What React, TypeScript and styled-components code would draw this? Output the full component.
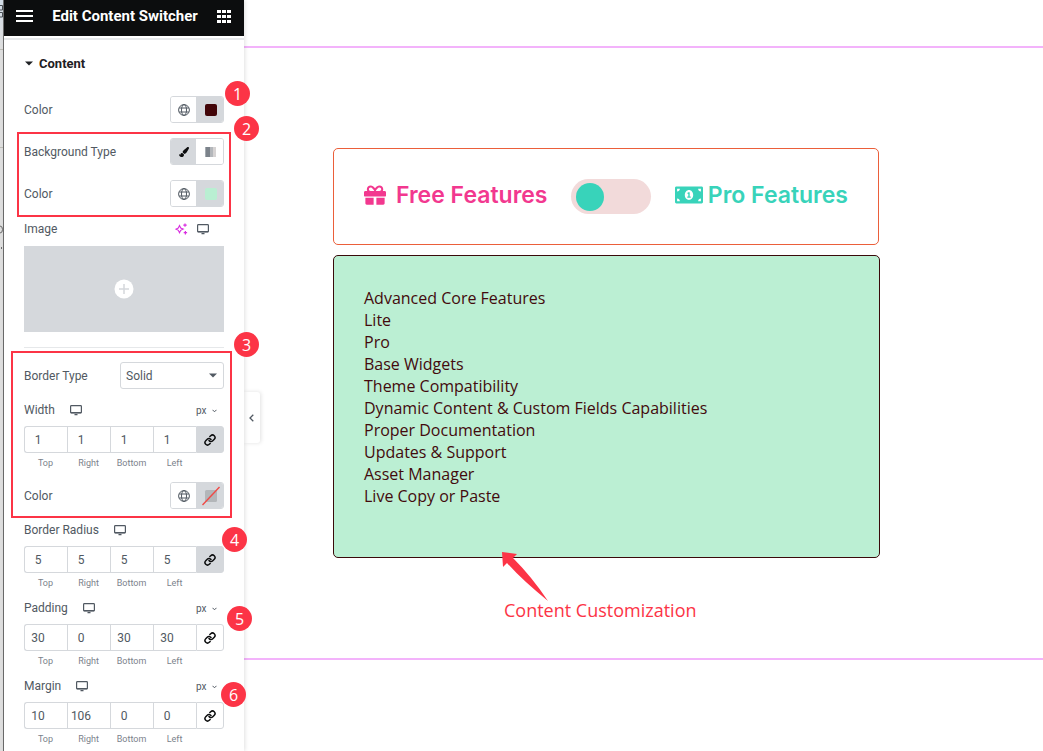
import React, { useState } from "react";
import styled, { createGlobalStyle } from "styled-components";
import { FaGift, FaMoneyBillAlt, FaPaintBrush } from "react-icons/fa";
import { Link } from "lucide-react";

const GlobalStyle = createGlobalStyle`
  *, *::before, *::after { box-sizing: border-box; }
  body { margin: 0; background: #fff; font-family: Roboto, "Liberation Sans", sans-serif; }
  button, input, select { font: inherit; color: inherit; margin: 0; }
`;

const accent = "#fc3446";
const line = "#d5d8dc";
const ink = "#515962";

const Page = styled.div`
  display: grid;
  grid-template-columns: 4px 240px minmax(0, 1fr);
  min-height: 100vh;
`;

/* Edge of the window behind the editor */
const Backdrop = styled.div`
  overflow: hidden;
  background: #dedede;
  border-right: 1px solid #6c6c6c;
`;
const BackdropBar = styled.div<{ $height: number; $tint?: boolean }>`
  height: ${(p) => p.$height}px;
  border-bottom: 1px solid #bdbdb6;
  background: ${(p) => (p.$tint ? "linear-gradient(#d3dde8, #dedede)" : "transparent")};
  svg { display: block; }
`;

const Panel = styled.aside`
  position: relative;
  z-index: 2;
  background: #fff;
  color: ${ink};
  font-size: 12px;
  box-shadow: 1px 0 4px rgba(0, 0, 0, 0.12);
`;
const PanelHeader = styled.header`
  display: flex;
  align-items: center;
  justify-content: space-between;
  height: 36px;
  padding: 0 13px 4px 12px;
  background: #0c0d0e;
  color: #fff;
`;
const PanelTitle = styled.h1`
  margin: 0;
  font-size: 15px;
  line-height: 20px;
  font-weight: 700;
`;
const HeaderButton = styled.button`
  display: flex;
  padding: 0;
  border: 0;
  background: none;
`;
const PanelBody = styled.div`
  margin-top: 2px;
  padding: 0 20px 6px;
  border-top: 2px solid #e6e8ea;
`;
const SectionToggle = styled.button`
  display: flex;
  align-items: center;
  gap: 6px;
  width: 100%;
  height: 47px;
  margin-bottom: 9px;
  padding: 0;
  border: 0;
  background: none;
  color: #1f2124;
  font-size: 13px;
  font-weight: 700;
`;
const Group = styled.section<{ $gap: number; $top?: number }>`
  position: relative;
  display: flex;
  flex-direction: column;
  gap: ${(p) => p.$gap}px;
  margin-top: ${(p) => p.$top ?? 0}px;
`;
const Row = styled.div`
  display: flex;
  align-items: center;
  justify-content: space-between;
  height: 27px;
`;
const LabelRow = styled.div`
  display: flex;
  align-items: center;
  height: 16px;
`;
const LabelText = styled.span`
  line-height: 16px;
  margin-right: 15px;
`;
const Spacer = styled.span`
  flex: 1;
`;
const Outline = styled.div<{ $left: number; $right: number; $top: number; $bottom: number }>`
  position: absolute;
  left: ${(p) => -p.$left}px;
  right: ${(p) => -p.$right}px;
  top: ${(p) => -p.$top}px;
  bottom: ${(p) => -p.$bottom}px;
  border: 2px solid ${accent};
  pointer-events: none;
`;
const Badge = styled.span<{ $x: number; $y: number }>`
  position: absolute;
  left: ${(p) => p.$x}px;
  top: ${(p) => p.$y}px;
  z-index: 3;
  width: 25px;
  height: 25px;
  border-radius: 50%;
  background: ${accent};
  color: #fff;
  font: 16px/26px "Open Sans", "Noto Sans", sans-serif;
  text-align: center;
`;

const Segments = styled.div`
  display: flex;
  width: 54px;
  height: 27px;
  border: 1px solid ${line};
  border-radius: 3px;
  overflow: hidden;
`;
const Segment = styled.button<{ $on?: boolean }>`
  display: flex;
  flex: 1;
  align-items: center;
  justify-content: center;
  padding: 0;
  border: 0;
  background: ${(p) => (p.$on ? line : "#fff")};
  color: ${(p) => (p.$on ? "#0c0d0e" : ink)};
  & + & { padding-left: 2px; }
`;
const Swatch = styled.span<{ $color: string }>`
  width: 12px;
  height: 12px;
  border-radius: 2px;
  background: ${(p) => p.$color};
`;

const MediaButton = styled.button`
  display: flex;
  align-items: center;
  justify-content: center;
  width: 100%;
  height: 86px;
  margin-top: 9px;
  padding: 0;
  border: 0;
  background: ${line};
`;
const ImageTools = styled.div`
  display: flex;
  align-items: center;
  gap: 9px;
  margin: 0 15px 0 auto;
`;
const Divider = styled.hr`
  height: 1px;
  margin: 15px 0 14px;
  border: 0;
  background: #e6e8ea;
`;
const SelectWrap = styled.div`
  position: relative;
  width: 104px;
  svg { position: absolute; right: 7px; top: 11px; pointer-events: none; }
`;
const Select = styled.select`
  appearance: none;
  display: block;
  width: 100%;
  height: 27px;
  padding: 0 5px;
  border: 1px solid ${line};
  border-radius: 3px;
  background: #fff;
`;
const UnitWrap = styled.div`
  position: relative;
  width: 28px;
  svg { position: absolute; right: 7px; top: 7px; pointer-events: none; }
`;
const UnitSelect = styled.select`
  appearance: none;
  display: block;
  width: 100%;
  height: 16px;
  padding: 0;
  border: 0;
  background: none;
  font-size: 10px;
`;

const Sides = styled.div`
  display: grid;
  grid-template-columns: repeat(4, 1fr) 28px;
  margin-top: 8px;
`;
const Side = styled.label`
  display: flex;
  flex-direction: column;
  gap: 4px;
  font-size: 9px;
  line-height: 12px;
  text-align: center;
  color: #7b828c;
  &:first-child input { border-radius: 3px 0 0 3px; }
`;
const SideInput = styled.input`
  width: 100%;
  height: 27px;
  padding: 0 16px 0 0;
  border: 1px solid ${line};
  border-right: 0;
  border-radius: 0;
  background: #fff;
  color: ${ink};
  font-size: 12px;
  text-align: center;
`;
const LinkButton = styled.button<{ $on: boolean }>`
  display: flex;
  align-items: center;
  justify-content: center;
  height: 27px;
  padding: 0;
  border: 1px solid ${line};
  border-radius: 0 3px 3px 0;
  background: ${(p) => (p.$on ? line : "#fff")};
  color: #0c0d0e;
`;

const Canvas = styled.main`
  position: relative;
  padding-top: 46px;
`;
const CollapseButton = styled.button`
  position: absolute;
  left: 0;
  top: 392px;
  display: flex;
  align-items: center;
  justify-content: center;
  width: 16px;
  height: 51px;
  padding: 0 2px 0 0;
  border: 0;
  border-radius: 0 3px 3px 0;
  background: #fff;
  box-shadow: 1px 0 4px rgba(0, 0, 0, 0.12);
`;
const PreviewSection = styled.section`
  padding: 100px 163px 36px 89px;
  border: solid #f3b3fb;
  border-width: 2px 0;
`;
const Switcher = styled.div`
  display: flex;
  align-items: center;
  justify-content: space-between;
  height: 97px;
  margin-right: 1px;
  padding: 0 30px;
  border: 1px solid #eb5f3a;
  border-radius: 5px;
`;
const Option = styled.span<{ $color: string; $gap: number }>`
  display: flex;
  align-items: center;
  gap: ${(p) => p.$gap}px;
  margin-bottom: 4px;
  color: ${(p) => p.$color};
  font-family: Inter, "Open Sans", sans-serif;
  font-size: 23px;
  line-height: 32px;
  font-weight: 600;
  white-space: nowrap;
`;
const Toggle = styled.input`
  appearance: none;
  width: 80px;
  height: 35px;
  margin: 0;
  padding: 4px 5px;
  border-radius: 18px;
  background: #f2dada;
  &::before {
    content: "";
    display: block;
    width: 28px;
    height: 28px;
    border-radius: 50%;
    background: #38d3ba;
  }
  &:checked::before { margin-left: auto; }
`;
const FeatureBox = styled.div`
  min-height: 303px;
  margin-top: 10px;
  padding: 31px 30px;
  border: 1px solid #3a0a0a;
  border-radius: 5px;
  background: #bbefd3;
  color: #430a0d;
`;
const FeatureList = styled.ul`
  margin: 0;
  padding: 0;
  list-style: none;
  font: 400 16px/22px "Open Sans", "Noto Sans", sans-serif;
`;
const Callout = styled.p`
  position: relative;
  width: max-content;
  margin: 40px 0 0 171px;
  color: ${accent};
  font: 400 18px/24px "Open Sans", "Noto Sans", sans-serif;
  svg { position: absolute; left: -2px; bottom: 21px; }
`;

const GlobeIcon = () => (
  <svg width="12" height="12" viewBox="0 0 12 12" fill="none" stroke="currentColor">
    <circle cx="6" cy="6" r="5.4" />
    <ellipse cx="6" cy="6" rx="2.5" ry="5.4" />
    <path d="M1.2 4h9.6M1.2 8h9.6" />
  </svg>
);
const MonitorIcon = () => (
  <svg width="12" height="11" viewBox="0 0 12 11" fill="none">
    <rect x="0.6" y="0.6" width="10.8" height="7.4" rx="0.8" stroke={ink} strokeWidth="1.2" />
    <path d="M1 7.6h10M4.5 9.6h3" stroke={ink} strokeWidth="1.4" />
  </svg>
);
const SparkleIcon = () => (
  <svg width="13" height="12" viewBox="0 0 13 12" fill="none" stroke="#d92fe0">
    <path d="M4.5 2.6L5.7 5l2.5 1.1-2.5 1.2-1.2 2.4-1.2-2.4L.9 6.1 3.3 5z" strokeWidth="1.1" />
    <path d="M10 .4v3.4M8.3 2.1h3.4M10.4 8v3.4M8.7 9.7h3.4" strokeWidth="1.2" />
  </svg>
);
const GradientIcon = () => (
  <svg width="12" height="10" viewBox="0 0 12 10">
    <rect width="1" height="10" fill="#a5abb1" />
    <rect x="1" width="4" height="10" fill="#7c838b" />
    <rect x="5" width="3" height="10" fill="#b4b7bb" />
    <rect x="8" width="3" height="10" fill="#d6d3d3" />
  </svg>
);
const NoColorIcon = () => (
  <svg width="20" height="20" viewBox="0 0 20 20">
    <rect x="4" y="4" width="12" height="12" rx="1.5" fill="#b3b6b9" />
    <path d="M1.5 19L18.5 1" stroke="#f04a46" strokeWidth="1.4" />
  </svg>
);
const CaretIcon = ({ color }: { color: string }) => (
  <svg width="8" height="5" viewBox="0 0 8 5">
    <path d="M0 .5h8L4 4.5z" fill={color} />
  </svg>
);
const ChevronIcon = () => (
  <svg width="5" height="4" viewBox="0 0 5 4">
    <path d="M.5 .8l2 2 2-2" fill="none" stroke={ink} />
  </svg>
);

const ColorControl = ({ label, color }: { label: string; color?: string }) => (
  <Row>
    <span>{label}</span>
    <Segments role="group" aria-label={label}>
      <Segment type="button" aria-label="Global color">
        <GlobeIcon />
      </Segment>
      <Segment type="button" $on aria-label="Pick color">
        {color ? <Swatch $color={color} /> : <NoColorIcon />}
      </Segment>
    </Segments>
  </Row>
);

interface DimensionsProps {
  label: string;
  values: number[];
  linked?: boolean;
  unit?: boolean;
}
const sideNames = ["Top", "Right", "Bottom", "Left"];

const Dimensions = ({ label, values, linked = false, unit = true }: DimensionsProps) => {
  const [on, setOn] = useState(linked);
  return (
    <div>
      <LabelRow>
        <LabelText>{label}</LabelText>
        <MonitorIcon />
        <Spacer />
        {unit && (
          <UnitWrap>
            <UnitSelect aria-label={`${label} unit`}>
              <option>px</option>
            </UnitSelect>
            <ChevronIcon />
          </UnitWrap>
        )}
      </LabelRow>
      <Sides>
        {sideNames.map((name, i) => (
          <Side key={name}>
            <SideInput inputMode="numeric" defaultValue={values[i]} />
            {name}
          </Side>
        ))}
        <LinkButton type="button" $on={on} aria-label="Link values" onClick={() => setOn(!on)}>
          <Link size={12} strokeWidth={3} />
        </LinkButton>
      </Sides>
    </div>
  );
};

const features = [
  "Advanced Core Features",
  "Lite",
  "Pro",
  "Base Widgets",
  "Theme Compatibility",
  "Dynamic Content & Custom Fields Capabilities",
  "Proper Documentation",
  "Updates & Support",
  "Asset Manager",
  "Live Copy or Paste",
];

export default function App() {
  return (
    <Page>
      <GlobalStyle />
      <Backdrop aria-hidden>
        <BackdropBar $height={50} $tint>
          <svg width="3" height="18" viewBox="0 0 3 18">
            <path d="M0 5.500h2.500v4.500H0M0 12.500h2.500v4.500H0" fill="none" stroke="#4a4f55" />
          </svg>
        </BackdropBar>
        <BackdropBar $height={98} />
        <svg width="3" height="104" viewBox="0 0 3 104">
          <path d="M0 78q2.500 0 2.500 3.500t-2.500 3.500M1.500 99v2" fill="none" stroke="#6a6a6a" />
        </svg>
      </Backdrop>

      <Panel>
        <PanelHeader>
          <HeaderButton type="button" aria-label="Menu">
            <svg width="17" height="12" viewBox="0 0 17 12">
              <path d="M0 1h17M0 6h17M0 11h17" stroke="#fff" strokeWidth="2" />
            </svg>
          </HeaderButton>
          <PanelTitle>Edit Content Switcher</PanelTitle>
          <HeaderButton type="button" aria-label="Widgets">
            <svg width="14" height="13" viewBox="0 0 14 13">
              <path d="M0 1.5h14M0 6.5h14M0 11.5h14" stroke="#fff" strokeWidth="3" strokeDasharray="4 1" />
            </svg>
          </HeaderButton>
        </PanelHeader>

        <PanelBody>
          <SectionToggle type="button">
            <svg width="9" height="5" viewBox="0 0 9 5">
              <path d="M1 .5h8L5 4.5z" fill="#1f2124" />
            </svg>
            Content
          </SectionToggle>

          <Group $gap={0}>
            <ColorControl label="Color" color="#420508" />
            <Badge $x={201} $y={-15}>1</Badge>
          </Group>

          <Group $gap={15} $top={15}>
            <Row>
              <span>Background Type</span>
              <Segments role="group" aria-label="Background Type">
                <Segment type="button" $on aria-label="Classic">
                  <FaPaintBrush size={10} />
                </Segment>
                <Segment type="button" aria-label="Gradient">
                  <GradientIcon />
                </Segment>
              </Segments>
            </Row>
            <ColorControl label="Color" color="#b9efd2" />
            <Outline $left={7} $right={7} $top={6} $bottom={10} />
            <Badge $x={210} $y={-22}>2</Badge>
          </Group>

          <Group $gap={0} $top={14}>
            <LabelRow>
              <LabelText>Image</LabelText>
              <ImageTools>
                <SparkleIcon />
                <MonitorIcon />
              </ImageTools>
            </LabelRow>
            <MediaButton type="button" aria-label="Choose image">
              <svg width="20" height="20" viewBox="0 0 20 20">
                <circle cx="10" cy="10" r="9.5" fill="#fff" />
                <path d="M5 10h10M10 5v10" stroke={line} strokeWidth="1.5" />
              </svg>
            </MediaButton>
          </Group>
          <Divider />

          <Group $gap={13}>
            <Row>
              <label htmlFor="border-type">Border Type</label>
              <SelectWrap>
                <Select id="border-type">
                  <option>Solid</option>
                </Select>
                <CaretIcon color={ink} />
              </SelectWrap>
            </Row>
            <Dimensions label="Width" values={[1, 1, 1, 1]} linked />
            <ColorControl label="Color" />
            <Outline $left={13} $right={8} $top={11} $bottom={9} />
            <Badge $x={210} $y={-30}>3</Badge>
          </Group>

          <Group $gap={0} $top={13}>
            <Dimensions label="Border Radius" values={[5, 5, 5, 5]} linked unit={false} />
            <Badge $x={198} $y={5}>4</Badge>
          </Group>
          <Group $gap={0} $top={11}>
            <Dimensions label="Padding" values={[30, 0, 30, 30]} />
            <Badge $x={203} $y={6}>5</Badge>
          </Group>
          <Group $gap={0} $top={11}>
            <Dimensions label="Margin" values={[10, 106, 0, 0]} />
            <Badge $x={197} $y={4}>6</Badge>
          </Group>
        </PanelBody>
      </Panel>

      <Canvas>
        <CollapseButton type="button" aria-label="Collapse panel">
          <svg width="5" height="8" viewBox="0 0 5 8">
            <path d="M4.3 .8L1 4l3.300 3.200" fill="none" stroke="#515962" strokeWidth="1.300" />
          </svg>
        </CollapseButton>
        <PreviewSection>
          <Switcher>
            <Option $color="#f2388f" $gap={10}>
              <FaGift size={22} />
              Free Features
            </Option>
            <Toggle type="checkbox" role="switch" aria-label="Show pro features" />
            <Option $color="#38d3ba" $gap={5}>
              <FaMoneyBillAlt size={28} />
              Pro Features
            </Option>
          </Switcher>
          <FeatureBox>
            <FeatureList>
              {features.map((f) => (
                <li key={f}>{f}</li>
              ))}
            </FeatureList>
          </FeatureBox>
          <Callout>
            <svg width="46" height="49" viewBox="0 0 46 49">
              <path d="M0 0L15 2L11 6Q30 25 46 49Q20 28 5 11L1 15z" fill={accent} />
            </svg>
            Content Customization
          </Callout>
        </PreviewSection>
      </Canvas>
    </Page>
  );
}
